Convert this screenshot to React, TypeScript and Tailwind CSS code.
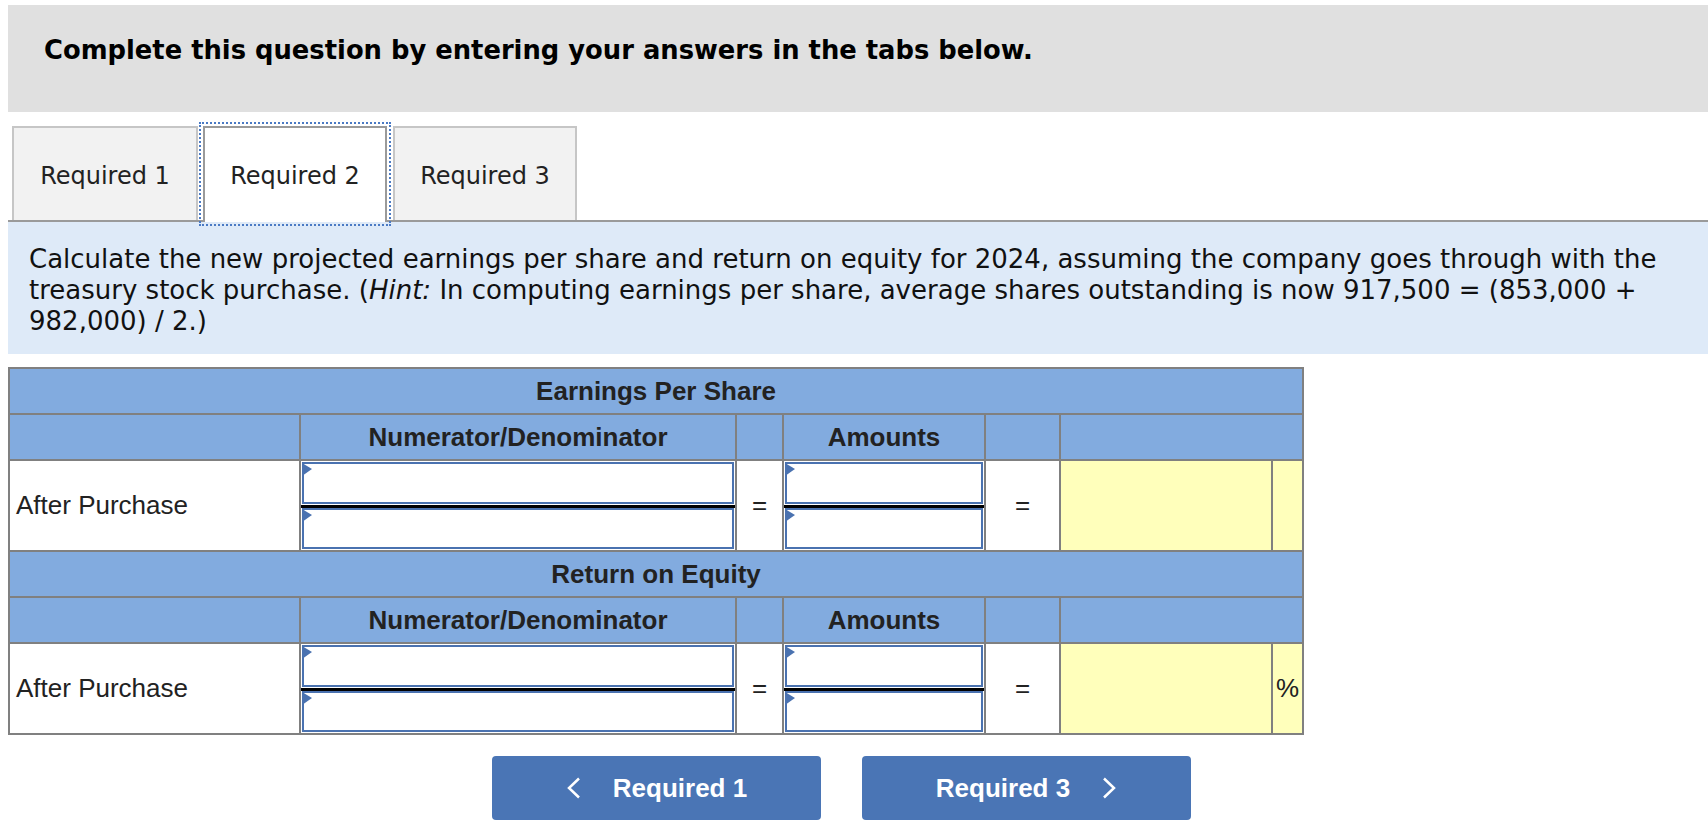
import React from 'react'

const verdana = { fontFamily: '"DejaVu Sans", Verdana, sans-serif' }
const arial = { fontFamily: '"Liberation Sans", Arial, sans-serif' }

function AnswerBox({ h }: { h: string }) {
  return (
    <div className={`relative mx-[1px] border-2 border-[#4a72b0] bg-white ${h}`}>
      <span className="absolute left-[-2px] top-[-1px] h-0 w-0 border-t-[6px] border-b-[7px] border-l-[10px] border-t-transparent border-b-transparent border-l-[#4a72b0]" />
    </div>
  )
}

function Fraction() {
  return (
    <div className="flex flex-col py-[1px]">
      <AnswerBox h="h-[42px]" />
      <div className="flex h-[4px] items-center">
        <div className="h-[3px] w-full bg-black" />
      </div>
      <AnswerBox h="h-[41px]" />
    </div>
  )
}

function Section({ title, unit }: { title: string; unit?: string }) {
  const cell = 'border-2 border-[#808080]'
  return (
    <>
      <tr className="bg-[#82abdf]">
        <td colSpan={7} className={`${cell} h-[46px] text-center font-bold text-[#222]`}>
          {title}
        </td>
      </tr>
      <tr className="bg-[#82abdf] font-bold text-[#222]">
        <td className={`${cell} h-[46px]`} />
        <td className={`${cell} text-center`}>Numerator/Denominator</td>
        <td className={cell} />
        <td className={`${cell} text-center`}>Amounts</td>
        <td className={cell} />
        <td colSpan={2} className={cell} />
      </tr>
      <tr className="text-[#222]">
        <td className={`${cell} h-[91px] bg-white pl-[6px]`}>After Purchase</td>
        <td className={`${cell} bg-white p-0`}>
          <Fraction />
        </td>
        <td className={`${cell} bg-white text-center`}>=</td>
        <td className={`${cell} bg-white p-0`}>
          <Fraction />
        </td>
        <td className={`${cell} bg-white text-center`}>=</td>
        <td className={`${cell} bg-[#ffffbb]`} />
        <td className={`${cell} bg-[#ffffbb] text-center`}>{unit}</td>
      </tr>
    </>
  )
}

export default function App() {
  return (
    <div className="min-h-screen bg-white pl-2 pt-[5px]">
      {/* instructions banner */}
      <div className="h-[107px] bg-[#e0e0e0] pl-[36px] pt-[30px]" style={verdana}>
        <p className="text-[25.8px] font-bold leading-[31px] text-black">
          Complete this question by entering your answers in the tabs below.
        </p>
      </div>

      {/* tabs */}
      <div className="mt-[14px] flex h-[96px] border-b-2 border-[#9a9a9a] text-[24px] text-[#222]" style={verdana}>
        <div className="ml-[4px] flex w-[186px] items-center justify-center border-2 border-b-0 border-[#c6c6c6] bg-[#f2f2f2] pt-[4px]">
          Required 1
        </div>
        <div className="relative z-10 mb-[-2px] ml-[5px] flex w-[184px] items-center justify-center border-2 border-b-0 border-[#9a9a9a] bg-white pt-[4px] pb-[2px] outline-2 outline-offset-2 outline-dotted outline-[#4a7ac4]">
          Required 2
        </div>
        <div className="ml-[6px] flex w-[184px] items-center justify-center border-2 border-b-0 border-[#c6c6c6] bg-[#f2f2f2] pt-[4px]">
          Required 3
        </div>
      </div>

      {/* question text */}
      <div className="bg-[#deeaf8] pb-[17px] pl-[21px] pt-[22px] text-[26px] leading-[31px] text-[#111]" style={verdana}>
        Calculate the new projected earnings per share and return on equity for 2024, assuming the company goes through with the
        <br />
        treasury stock purchase. (<i>Hint:</i> In computing earnings per share, average shares outstanding is now 917,500 = (853,000 +
        <br />
        982,000) / 2.)
      </div>

      {/* answer grid */}
      <table className="mt-[13px] w-[1296px] table-fixed border-collapse border-2 border-[#808080] text-[26px]" style={arial}>
        <colgroup>
          <col className="w-[291px]" />
          <col className="w-[436px]" />
          <col className="w-[47px]" />
          <col className="w-[202px]" />
          <col className="w-[75px]" />
          <col className="w-[212px]" />
          <col className="w-[31px]" />
        </colgroup>
        <tbody>
          <Section title="Earnings Per Share" />
          <Section title="Return on Equity" unit="%" />
        </tbody>
      </table>

      {/* navigation */}
      <div className="ml-[484px] mt-[21px] flex gap-[41px] text-[26px] font-bold text-white" style={arial}>
        <button className="flex h-[64px] w-[329px] items-center justify-center gap-[32px] rounded-[4px] bg-[#4a75b5]">
          <svg width="15" height="22" viewBox="0 0 15 22" fill="none" stroke="white" strokeWidth="2.5">
            <path d="M13 1.5 L3 11 L13 20.5" />
          </svg>
          <span>Required 1</span>
        </button>
        <button className="flex h-[64px] w-[329px] items-center justify-center gap-[32px] rounded-[4px] bg-[#4a75b5]">
          <span>Required 3</span>
          <svg width="15" height="22" viewBox="0 0 15 22" fill="none" stroke="white" strokeWidth="2.5">
            <path d="M2 1.5 L12 11 L2 20.5" />
          </svg>
        </button>
      </div>
    </div>
  )
}
